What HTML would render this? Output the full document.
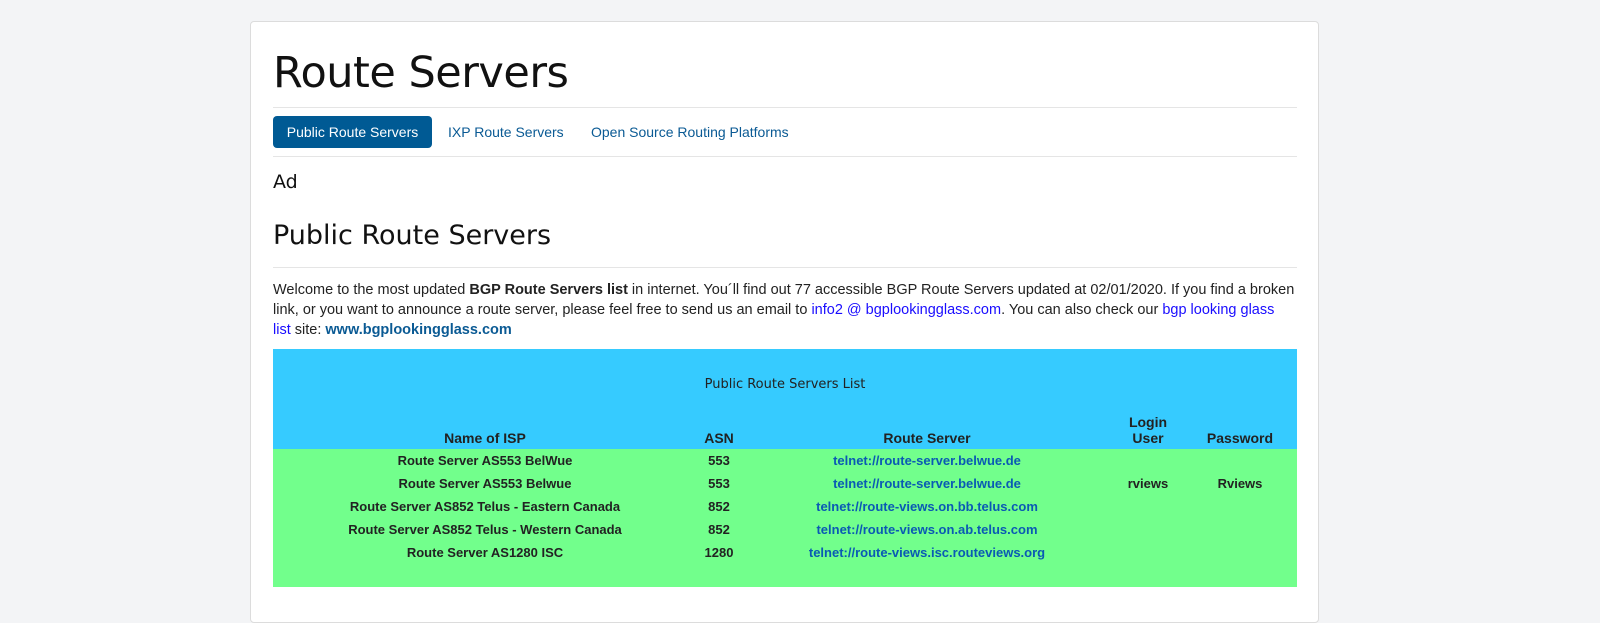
<!DOCTYPE html>
<html><head><meta charset="utf-8"><style>
body{margin:0;background:#f3f4f6;font-family:"Liberation Sans",sans-serif;color:#222;}
.card{position:absolute;left:250px;top:21px;width:1067px;height:600px;background:#fff;border:1px solid #dcdcdc;border-radius:4px;}
h1{margin:0;font-weight:400;font-size:43px;color:#111;position:absolute;top:26px;left:22px;font-family:"DejaVu Sans","Liberation Sans",sans-serif;letter-spacing:-0.5px;}
.hr{position:absolute;left:22px;width:1024px;height:1px;background:#e5e5e5;}
.pill{position:absolute;top:94px;height:32px;line-height:32px;font-size:14px;color:#0a5a94;}
.act{background:#005a94;color:#fff;border-radius:4px;left:22px;width:159px;text-align:center;}
.ad{position:absolute;left:22px;top:149px;font-size:19px;color:#111;font-family:"DejaVu Sans",sans-serif;}
h2{margin:0;position:absolute;left:22px;top:198px;font-weight:400;font-size:27px;color:#111;font-family:"DejaVu Sans",sans-serif;}
p{position:absolute;left:22px;top:258px;width:1040px;margin:0;font-size:14.5px;line-height:20px;color:#222;white-space:nowrap;}
p a{color:#1a0dff;text-decoration:none}
table{position:absolute;left:22px;top:327px;width:1024px;border-collapse:collapse;font-size:13px;font-weight:bold;}
td{text-align:center;padding:0;height:23px;}
.cap td{background:#36cbff;height:50px;font-weight:400;font-size:13px;font-family:"DejaVu Sans",sans-serif;padding-top:10px;}
.hd td{background:#36cbff;height:37px;font-size:14px;vertical-align:bottom;padding-bottom:3px;}
tbody td{background:#72ff8c;}
.l{color:#0a5ab4}
</style></head><body>
<div class="card">
<h1>Route Servers</h1>
<div class="hr" style="top:85px"></div>
<div class="pill act">Public Route Servers</div>
<div class="pill" style="left:197px">IXP Route Servers</div>
<div class="pill" style="left:340px">Open Source Routing Platforms</div>
<div class="hr" style="top:134px"></div>
<div class="ad">Ad</div>
<h2>Public Route Servers</h2>
<div class="hr" style="top:245px"></div>
<p>Welcome to the most updated <b>BGP Route Servers list</b> in internet. You´ll find out 77 accessible BGP Route Servers updated at 02/01/2020. If you find a broken<br>link, or you want to announce a route server, please feel free to send us an email to <a>info2 @ bgplookingglass.com</a>. You can also check our <a>bgp looking glass</a><br><a>list</a> site: <b style="color:#0a5a94">www.bgplookingglass.com</b></p>
<table>
<tr class="cap"><td colspan="5">Public Route Servers List</td></tr>
<tr class="hd"><td style="width:424px">Name of ISP</td><td style="width:44px">ASN</td><td style="width:372px">Route Server</td><td style="width:70px">Login<br>User</td><td>Password</td></tr>
<tbody>
<tr><td>Route Server AS553 BelWue</td><td>553</td><td class="l">telnet://route-server.belwue.de</td><td></td><td></td></tr>
<tr><td>Route Server AS553 Belwue</td><td>553</td><td class="l">telnet://route-server.belwue.de</td><td>rviews</td><td>Rviews</td></tr>
<tr><td>Route Server AS852 Telus - Eastern Canada</td><td>852</td><td class="l">telnet://route-views.on.bb.telus.com</td><td></td><td></td></tr>
<tr><td>Route Server AS852 Telus - Western Canada</td><td>852</td><td class="l">telnet://route-views.on.ab.telus.com</td><td></td><td></td></tr>
<tr><td>Route Server AS1280 ISC</td><td>1280</td><td class="l">telnet://route-views.isc.routeviews.org</td><td></td><td></td></tr>
<tr><td>&nbsp;</td><td></td><td></td><td></td><td></td></tr>
</tbody></table>
</div>
</body></html>
